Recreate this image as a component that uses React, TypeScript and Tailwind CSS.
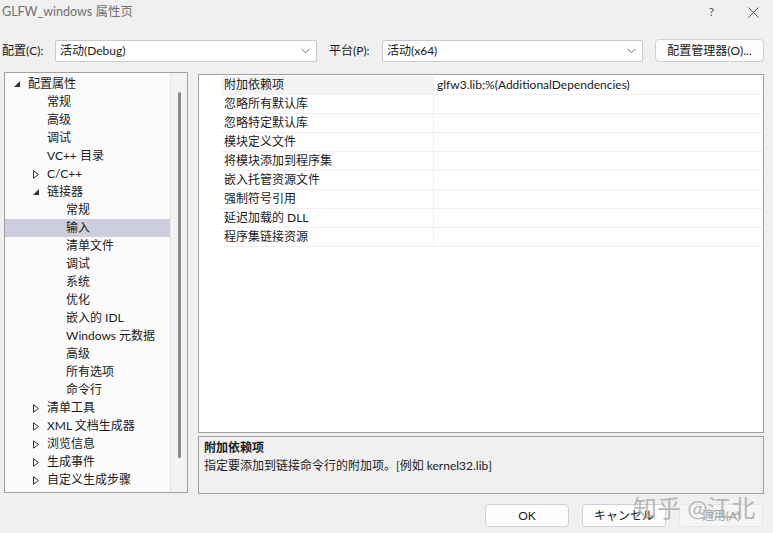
import React from 'react';

const font = { fontFamily: 'Lato, "Noto Sans CJK SC", sans-serif' };

type Node = { label: string; level: number; arrow?: 'open' | 'closed'; selected?: boolean };

const tree: Node[] = [
  { label: '配置属性', level: 0, arrow: 'open' },
  { label: '常规', level: 1 },
  { label: '高级', level: 1 },
  { label: '调试', level: 1 },
  { label: 'VC++ 目录', level: 1 },
  { label: 'C/C++', level: 1, arrow: 'closed' },
  { label: '链接器', level: 1, arrow: 'open' },
  { label: '常规', level: 2 },
  { label: '输入', level: 2, selected: true },
  { label: '清单文件', level: 2 },
  { label: '调试', level: 2 },
  { label: '系统', level: 2 },
  { label: '优化', level: 2 },
  { label: '嵌入的 IDL', level: 2 },
  { label: 'Windows 元数据', level: 2 },
  { label: '高级', level: 2 },
  { label: '所有选项', level: 2 },
  { label: '命令行', level: 2 },
  { label: '清单工具', level: 1, arrow: 'closed' },
  { label: 'XML 文档生成器', level: 1, arrow: 'closed' },
  { label: '浏览信息', level: 1, arrow: 'closed' },
  { label: '生成事件', level: 1, arrow: 'closed' },
  { label: '自定义生成步骤', level: 1, arrow: 'closed' },
];

const props = [
  '附加依赖项',
  '忽略所有默认库',
  '忽略特定默认库',
  '模块定义文件',
  '将模块添加到程序集',
  '嵌入托管资源文件',
  '强制符号引用',
  '延迟加载的 DLL',
  '程序集链接资源',
];

const Chevron = () => (
  <svg width="9" height="6" viewBox="0 0 9 6" className="shrink-0">
    <path d="M0.5 0.8 L4.5 4.8 L8.5 0.8" fill="none" stroke="#6b6b6b" strokeWidth="1" />
  </svg>
);

const Arrow = ({ kind }: { kind: 'open' | 'closed' }) =>
  kind === 'open' ? (
    <svg width="8" height="8" viewBox="0 0 8 8">
      <path d="M7 1 L7 7 L1 7 Z" fill="#333" />
    </svg>
  ) : (
    <svg width="8" height="9" viewBox="0 0 8 9">
      <path d="M1.5 0.8 L6.5 4.5 L1.5 8.2 Z" fill="none" stroke="#333" strokeWidth="1" />
    </svg>
  );

const Select = ({ value, width }: { value: string; width: string }) => (
  <div className={`${width} h-[22px] bg-white border border-[#c8c8c8] rounded-[2px] flex items-center justify-between pl-[4px] pr-[6px] text-[12px] text-[#1a1a1a]`}>
    <span>{value}</span>
    <Chevron />
  </div>
);

export default function App() {
  return (
    <div style={font} className="relative w-[773px] h-[533px] bg-[#f0f0f0] flex flex-col overflow-hidden text-[#1a1a1a]">
      {/* title bar */}
      <div className="h-[24px] flex items-center justify-between pl-[2px] pr-[14px]">
        <span className="text-[12.5px] text-[#707070]">GLFW_windows 属性页</span>
        <div className="flex items-center gap-[34px] text-[#555]">
          <span className="text-[12px]">?</span>
          <svg width="11" height="11" viewBox="0 0 11 11">
            <path d="M0.5 0.5 L10.5 10.5 M10.5 0.5 L0.5 10.5" stroke="#555" strokeWidth="1" />
          </svg>
        </div>
      </div>

      {/* config row */}
      <div className="mt-[15px] h-[23px] flex items-center text-[12px]">
        <span className="pl-[2px] w-[55px]">配置(C):</span>
        <Select value="活动(Debug)" width="w-[262px]" />
        <span className="ml-[12px] w-[53px]">平台(P):</span>
        <Select value="活动(x64)" width="w-[261px]" />
        <div className="ml-[12px] w-[109px] h-[23px] bg-[#fdfdfd] border border-[#d0d0d0] rounded-[4px] flex items-center justify-center">
          配置管理器(O)...
        </div>
      </div>

      {/* main area */}
      <div className="mt-[10px] flex pl-[4px] gap-[10px]">
        {/* tree */}
        <div className="w-[184px] h-[421px] border border-[#a0a0a0] bg-[#fbfbfb] flex">
          <div className="flex-1 pt-[2px] text-[12px]">
            {tree.map((n, i) => (
              <div
                key={i}
                className={`h-[18px] flex items-center ${n.selected ? 'bg-[#cccedb]' : ''}`}
              >
                <div
                  className={`flex items-center ${
                    n.level === 0 ? 'pl-[8px]' : n.level === 1 ? 'pl-[27px]' : 'pl-[46px]'
                  }`}
                >
                  <span className="w-[12px] flex items-center">{n.arrow ? <Arrow kind={n.arrow} /> : null}</span>
                  <span className="pl-[3px]">{n.label}</span>
                </div>
              </div>
            ))}
          </div>
          <div className="w-[17px] border-l border-[#e4e4e4] bg-[#f3f3f3] flex justify-center pt-[19px]">
            <div className="w-[3px] h-[366px] bg-[#8a8a8a] rounded-full" />
          </div>
        </div>

        {/* right column */}
        <div className="w-[566px] flex flex-col">
          <div className="mt-[2px] h-[359px] border border-[#a0a0a0] bg-white pt-[1px] text-[12px]">
            {props.map((p, i) => (
              <div key={i} className="h-[19px] flex">
                <div className="w-[22px]" />
                <div className={`w-[213px] flex items-center pl-[3px] border-b border-r border-[#f0f0f0] ${i === 0 ? 'bg-[#f3f4f6]' : ''}`}>
                  {p}
                </div>
                <div className="flex-1 flex items-center pl-[3px] border-b border-[#f0f0f0]">
                  {i === 0 ? 'glfw3.lib;%(AdditionalDependencies)' : ''}
                </div>
              </div>
            ))}
          </div>
          <div className="mt-[3px] h-[58px] border border-[#a0a0a0] bg-[#f0f0f0] pl-[5px] pt-[2px] text-[12px]">
            <div className="font-bold h-[18px] flex items-center">附加依赖项</div>
            <div className="h-[18px] flex items-center">指定要添加到链接命令行的附加项。[例如 kernel32.lib]</div>
          </div>
        </div>
      </div>

      {/* buttons */}
      <div className="mt-[10px] flex justify-end pr-[10px] gap-[13px] text-[12px]">
        <div className="w-[84px] h-[23px] bg-[#fdfdfd] border border-[#d0d0d0] rounded-[4px] flex items-center justify-center">OK</div>
        <div className="w-[84px] h-[23px] bg-[#fdfdfd] border border-[#d0d0d0] rounded-[4px] flex items-center justify-center">キャンセル</div>
        <div className="w-[84px] h-[23px] bg-[#f5f5f5] border border-[#e6e6e6] rounded-[4px] flex items-center justify-center text-[#a0a0a0]">適用(A)</div>
      </div>

      {/* watermark */}
      <div className="absolute left-[633px] top-[496px] text-[24px] leading-none whitespace-nowrap text-[#a8a8a8]/80 pointer-events-none">
        知乎 @江北
      </div>
    </div>
  );
}
